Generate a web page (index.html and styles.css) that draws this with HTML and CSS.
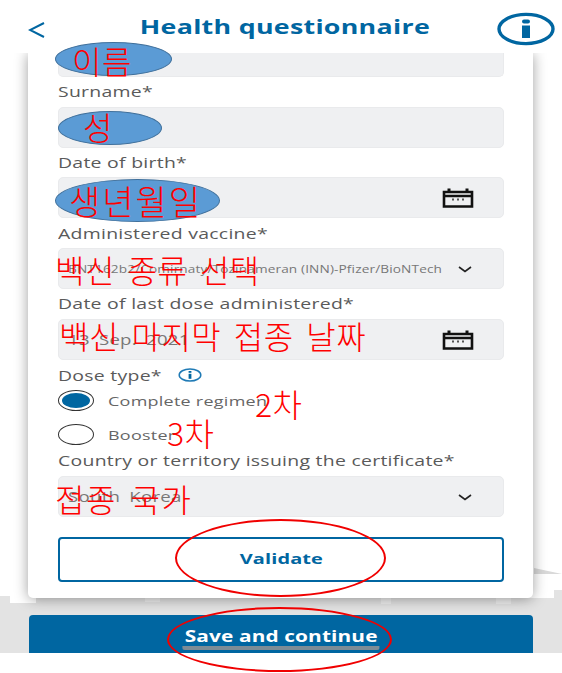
FILE: index.html
```html
<!DOCTYPE html>
<html lang="en">
<head>
<meta charset="utf-8">
<title>Health questionnaire</title>
<link rel="stylesheet" href="styles.css">
</head>
<body>
<div class="page">
  <header class="topbar">
    <svg class="back" viewBox="0 0 18 18" width="18" height="18"><path d="M16 2 L2 9 L16 16" fill="none" stroke="#0066a1" stroke-width="2"/></svg>
    <h1 class="title">Health questionnaire</h1>
    <svg class="info" viewBox="0 0 58 34" width="58" height="34"><ellipse cx="29" cy="17" rx="27" ry="14.6" fill="#fff" stroke="#0066a1" stroke-width="3.4"/><rect x="25" y="7.5" width="8" height="4" rx="2" fill="#0066a1"/><rect x="25" y="13.5" width="8" height="12.5" fill="#0066a1"/></svg>
  </header>
  <section class="card">
    <div class="input input-clipped"></div>
    <label class="label"><span class="wide">Surname*</span></label>
    <div class="input"></div>
    <label class="label"><span class="wide">Date of birth*</span></label>
    <div class="input">
      <svg class="cal" viewBox="0 0 32 21" width="32" height="21"><path d="M2 5 H30 V19.5 H2 Z M2 9 H30" fill="none" stroke="#111" stroke-width="2.6"/><path d="M7 1.5 V5 M25 1.5 V5" stroke="#111" stroke-width="3"/><path d="M10 12.5 H12 M15 12.5 H17 M20 12.5 H22" stroke="#555" stroke-width="2"/></svg>
    </div>
    <label class="label"><span class="wide">Administered vaccine*</span></label>
    <div class="input">
      <span class="value small">BNT162b2/Comirnaty/Tozinameran (INN)-Pfizer/BioNTech</span>
      <svg class="chev" viewBox="0 0 14 7" width="14" height="7"><path d="M1 1 L7 5.5 L13 1" fill="none" stroke="#222" stroke-width="1.6"/></svg>
    </div>
    <label class="label"><span class="wide">Date of last dose administered*</span></label>
    <div class="input">
      <span class="value">13 Sep. 2021</span>
      <svg class="cal" viewBox="0 0 32 21" width="32" height="21"><path d="M2 5 H30 V19.5 H2 Z M2 9 H30" fill="none" stroke="#111" stroke-width="2.6"/><path d="M7 1.5 V5 M25 1.5 V5" stroke="#111" stroke-width="3"/><path d="M10 12.5 H12 M15 12.5 H17 M20 12.5 H22" stroke="#555" stroke-width="2"/></svg>
    </div>
    <div class="label label-tall">
      <span class="wide">Dose type*</span>
      <svg class="mini-info" viewBox="0 0 24 14" width="24" height="14"><ellipse cx="12" cy="7" rx="10.8" ry="6" fill="none" stroke="#1f7ab5" stroke-width="1.5"/><rect x="10.6" y="3" width="2.8" height="1.8" fill="#0066a1"/><rect x="10.6" y="5.8" width="2.8" height="5" fill="#0066a1"/></svg>
    </div>
    <div class="radios">
      <div class="radio-row"><span class="radio checked"><span class="dot"></span></span><span class="radio-text">Complete regimen</span></div>
      <div class="radio-row"><span class="radio"></span><span class="radio-text">Booster</span></div>
    </div>
    <label class="label label-tall"><span class="wide">Country or territory issuing the certificate*</span></label>
    <div class="input">
      <span class="value">South Korea</span>
      <svg class="chev" viewBox="0 0 14 7" width="14" height="7"><path d="M1 1 L7 5.5 L13 1" fill="none" stroke="#222" stroke-width="1.6"/></svg>
    </div>
    <button class="validate" type="button"><span class="btn-text">Validate</span></button>
  </section>
  <footer class="footer">
    <button class="save" type="button"><span class="save-text">Save and continue</span></button>
  </footer>

  <div class="wedge"></div>
  <div class="blob blob-name"></div>
  <div class="blob blob-surname"></div>
  <div class="blob blob-birth"></div>
  <span class="note n-name">이름</span>
  <span class="note n-surname">성</span>
  <span class="note n-birth">생년월일</span>
  <span class="note n-vaccine">백신 종류 선택</span>
  <span class="note n-last">백신 마지막 접종 날짜</span>
  <span class="note n-second">2차</span>
  <span class="note n-third">3차</span>
  <span class="note n-country">접종 국가</span>
  <div class="ring ring-validate"></div>
  <div class="ring ring-save"></div>
</div>
</body>
</html>
```
FILE: styles.css
```css
* { box-sizing: border-box; }
html, body { margin: 0; padding: 0; background: #fff; }
body { width: 562px; height: 673px; overflow: hidden; font-family: "Open Sans", "Noto Sans", sans-serif; }
.page {
  position: relative; width: 562px; height: 673px; overflow: hidden;
  background:
    linear-gradient(#e3e3e3, #e3e3e3) 0 596px / 10px 2px no-repeat,
    linear-gradient(#e3e3e3, #e3e3e3) 554px 590px / 8px 8px no-repeat,
    #fff;
}

.topbar { position: relative; z-index: 2; height: 53px; background: #fff; display: flex; align-items: center; justify-content: center; }
.back { position: absolute; left: 28px; top: 21px; }
.title { margin: 0 0 -1px 8px; font-family: "Open Sans", sans-serif; font-size: 19px; font-weight: 700; letter-spacing: .2px; color: #0066a1; transform: scaleX(1.41); white-space: nowrap; }
.info { position: absolute; left: 497px; top: 12px; }

.card { position: relative; z-index: 1; width: 505px; margin-left: 28px; height: 545px; padding: 0 29px 0 30px; background: #fff; border-radius: 0 0 5px 5px; box-shadow: 0 1px 14px rgba(0,0,0,.38); }
.input { position: relative; height: 41px; background: #eff0f2; border: 1px solid #e9eaec; border-radius: 5px; display: flex; align-items: center; padding: 0 9px; }
.input-clipped { height: 24px; border-top: 0; border-radius: 0 0 5px 5px; }
.label { display: flex; align-items: center; height: 29.67px; font-size: 14.5px; letter-spacing: .2px; color: #5a5a5a; white-space: nowrap; }
.label-tall { height: 31px; }
.wide { display: inline-block; transform: scaleX(1.34); transform-origin: left center; }
.mini-info { margin-left: 42px; }
.value { display: inline-block; font-size: 14px; letter-spacing: .2px; word-spacing: 3px; color: #777; white-space: nowrap; transform: scaleX(1.33); transform-origin: left center; }
.small { font-size: 11.2px; letter-spacing: .1px; word-spacing: 0; transform: scaleX(1.22); }
.cal { position: absolute; right: 29px; top: 9px; }
.chev { position: absolute; right: 31px; top: 17px; }

.radios { display: flex; flex-direction: column; gap: 14px; }
.radio-row { display: flex; align-items: center; height: 20px; }
.radio { width: 36px; height: 21px; border: 1.5px solid #333; border-radius: 50%; background: #fff; display: flex; align-items: center; justify-content: center; }
.dot { width: 28px; height: 15px; border-radius: 50%; background: #0066a1; }
.radio-text { display: inline-block; margin-left: 14px; font-size: 13.5px; letter-spacing: .2px; color: #666; transform: scaleX(1.33); transform-origin: left center; }

.validate { display: block; width: 446px; height: 45px; margin-top: 20px; padding: 0 0 2px; background: #fff; border: 2px solid #0066a1; border-radius: 4px; font-family: "Open Sans", sans-serif; font-size: 15px; font-weight: 700; letter-spacing: .1px; color: #0066a1; }
.btn-text { display: inline-block; transform: scaleX(1.33); }

.footer {
  height: 55px; padding: 17px 29px 0;
  background:
    linear-gradient(#fff, #fff) 10px 0 / 26px 5px no-repeat,
    linear-gradient(#efefef, #efefef) 145px 0 / 15px 4px no-repeat,
    linear-gradient(#efefef, #efefef) 381px 0 / 10px 6px no-repeat,
    linear-gradient(#efefef, #efefef) 496px 0 / 15px 6px no-repeat,
    #e3e3e3;
}
.save { display: block; width: 504px; height: 38px; padding: 7px 0 0; background: #0066a1; border: 0; border-radius: 4px 4px 0 0; font-family: "Open Sans", sans-serif; font-size: 16px; font-weight: 700; letter-spacing: .1px; color: #fff; }
.save-text { display: inline-block; padding: 0 2px; border-bottom: 4px solid #7d8c96; line-height: 20px; border-radius: 2px; transform: scaleX(1.3); }

.wedge { position: absolute; left: 534px; top: 568px; width: 28px; height: 6px; background: #d9d9d9; clip-path: polygon(0 0, 100% 100%, 0 100%); }

.blob { position: absolute; z-index: 3; background: #5b9bd5; border: 1.5px solid #41719c; border-radius: 50%; }
.blob-name { left: 55px; top: 42px; width: 117px; height: 34px; }
.blob-surname { left: 58px; top: 111px; width: 104px; height: 34px; }
.blob-birth { left: 55px; top: 179px; width: 165px; height: 43px; }

.note { position: absolute; z-index: 4; font-family: "Noto Sans CJK KR", sans-serif; font-size: 32px; font-weight: 300; line-height: 36px; letter-spacing: .5px; word-spacing: 5px; color: #ff0000; white-space: nowrap; }
.n-name { left: 72px; top: 42px; }
.n-surname { left: 83px; top: 108px; }
.n-birth { left: 69px; top: 183px; font-size: 34px; letter-spacing: 2px; }
.n-vaccine { left: 55px; top: 251px; }
.n-last { left: 59px; top: 317px; }
.n-second { left: 255px; top: 385px; }
.n-third { left: 167px; top: 414px; }
.n-country { left: 55px; top: 480px; letter-spacing: 1.5px; }

.ring { position: absolute; z-index: 4; border: 2px solid #f00000; border-radius: 50%; }
.ring-validate { left: 175px; top: 519px; width: 211px; height: 78px; }
.ring-save { left: 167px; top: 607px; width: 225px; height: 65px; }
```
